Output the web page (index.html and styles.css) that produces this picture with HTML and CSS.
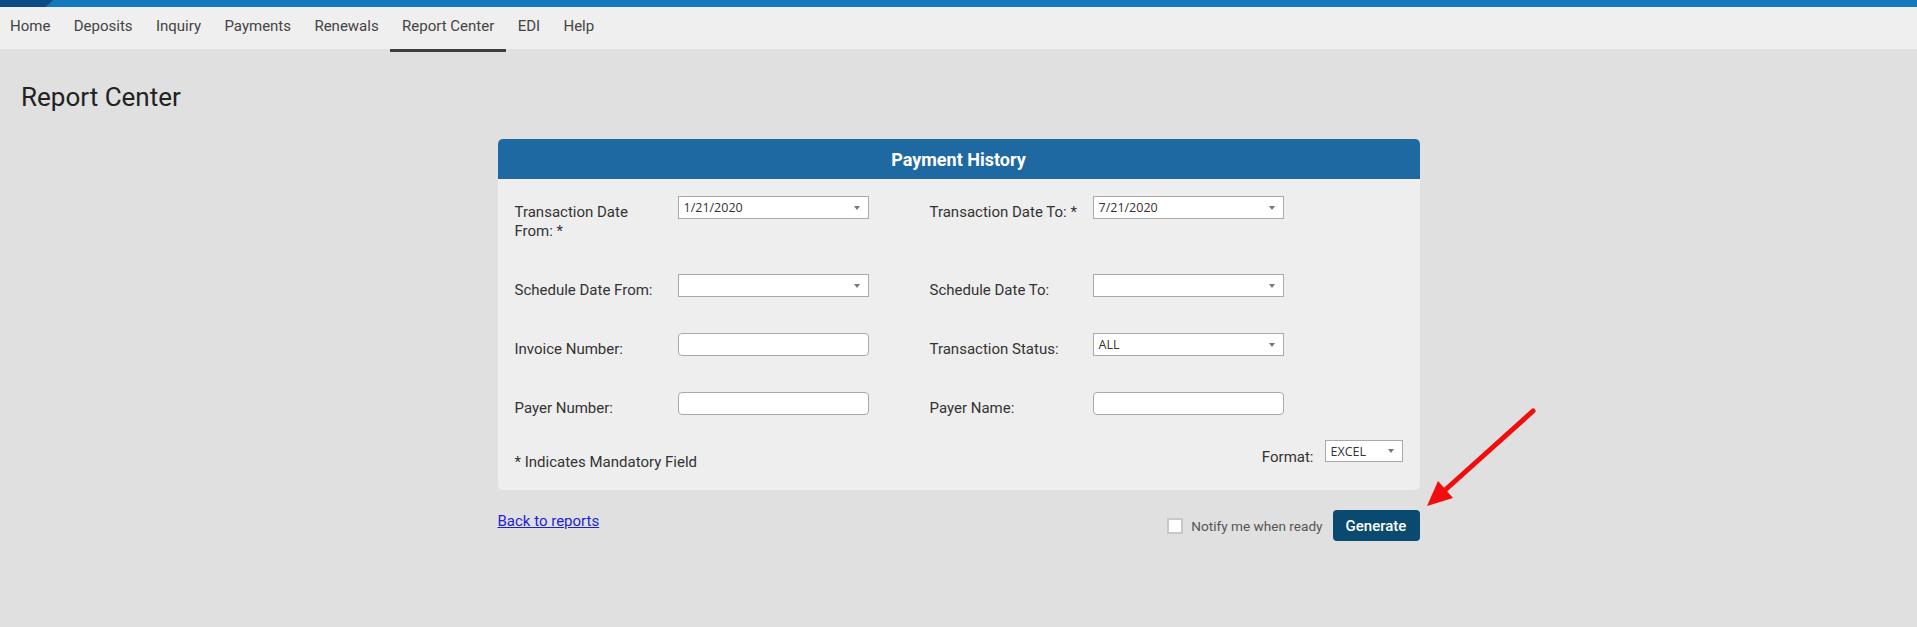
FILE: index.html
```html
<!DOCTYPE html>
<html>

<head>
    <meta charset="utf-8">
    <link rel="stylesheet" href="styles.css">
</head>

<body>
    <div class="topbar">
        <div class="topbar-tab"></div>
    </div>

    <div class="nav">
        <a class="nav-item">Home</a>
        <a class="nav-item">Deposits</a>
        <a class="nav-item">Inquiry</a>
        <a class="nav-item">Payments</a>
        <a class="nav-item">Renewals</a>
        <a class="nav-item active">Report Center</a>
        <a class="nav-item">EDI</a>
        <a class="nav-item">Help</a>
    </div>

    <h1 class="page-title">Report Center</h1>

    <div class="panel">
        <div class="panel-header">Payment History</div>
        <div class="panel-body">
            <div class="form-grid">
                <div class="field">
                    <label>Transaction Date From: *</label>
                    <div class="combo"><span>1/21/2020</span><span class="caret"></span></div>
                </div>
                <div class="field">
                    <label>Transaction Date To: *</label>
                    <div class="combo"><span>7/21/2020</span><span class="caret"></span></div>
                </div>

                <div class="field">
                    <label>Schedule Date From:</label>
                    <div class="combo"><span></span><span class="caret"></span></div>
                </div>
                <div class="field">
                    <label>Schedule Date To:</label>
                    <div class="combo"><span></span><span class="caret"></span></div>
                </div>

                <div class="field">
                    <label>Invoice Number:</label>
                    <div class="text-input"></div>
                </div>
                <div class="field">
                    <label>Transaction Status:</label>
                    <div class="combo"><span>ALL</span><span class="caret"></span></div>
                </div>

                <div class="field">
                    <label>Payer Number:</label>
                    <div class="text-input"></div>
                </div>
                <div class="field">
                    <label>Payer Name:</label>
                    <div class="text-input"></div>
                </div>
            </div>

            <div class="form-footer">
                <div class="mandatory-note">* Indicates Mandatory Field</div>
                <div class="format-group">
                    <label>Format:</label>
                    <div class="combo combo-small"><span>EXCEL</span><span class="caret"></span></div>
                </div>
            </div>
        </div>
    </div>

    <div class="actions">
        <a class="back-link" href="#">Back to reports</a>
        <div class="actions-right">
            <span class="checkbox"></span>
            <span class="notify-text">Notify me when ready</span>
            <button class="generate-btn">Generate</button>
        </div>
    </div>

    <!-- annotation arrow drawn over the page -->
    <svg class="annotation" width="1917" height="627" viewBox="0 0 1917 627">
        <line x1="1533" y1="411" x2="1444" y2="491" stroke="#f20d0d" stroke-width="5" stroke-linecap="round" />
        <polygon points="1427,506 1438,481 1453,498" fill="#f20d0d" />
    </svg>
</body>

</html>
```

FILE: styles.css
```css
* {
    margin: 0;
    padding: 0;
    box-sizing: border-box;
}

body {
    width: 1917px;
    min-height: 627px;
    font-family: Roboto, 'Liberation Sans', sans-serif;
    background: #e0e0e0;
    color: #333333;
    position: relative;
    overflow: hidden;
}

.topbar {
    height: 7px;
    background: #1479bc;
}

.topbar-tab {
    width: 53px;
    height: 7px;
    background: #0c4b85;
    clip-path: polygon(0 0, 100% 0, 86% 100%, 0 100%);
}

.nav {
    height: 42px;
    background: #efefef;
    display: flex;
}

.nav-item {
    position: relative;
    display: flex;
    align-items: center;
    padding: 0 11.7px 4px;
    font-size: 15px;
    color: #444444;
    cursor: pointer;
}

.nav-item:first-child {
    padding-left: 10px;
}

.nav-item.active::after {
    content: '';
    position: absolute;
    left: 0;
    right: 0;
    bottom: -3px;
    height: 3px;
    background: #3d3d3d;
}

.page-title {
    margin-top: 33px;
    padding-left: 21px;
    font-size: 26px;
    font-weight: 400;
    line-height: 31px;
    color: #222222;
}

.panel {
    width: 922px;
    margin: 26px auto 0;
}

.panel-header {
    height: 40px;
    background: #1f69a3;
    border-radius: 5px 5px 0 0;
    color: #ffffff;
    font-size: 18px;
    font-weight: 700;
    display: flex;
    align-items: center;
    justify-content: center;
}

.panel-body {
    background: #eeeeee;
    border-radius: 0 0 5px 5px;
    padding: 17px 17px 18px 17px;
}

.form-grid {
    display: grid;
    grid-template-columns: 354px 355px;
    column-gap: 61px;
    row-gap: 33px;
}

.field {
    display: flex;
    align-items: flex-start;
}

.field label {
    width: 163px;
    padding: 7px 11px 0 0;
    font-size: 15px;
    line-height: 19px;
    color: #333333;
}

.combo {
    width: 191px;
    height: 23px;
    background: #ffffff;
    border: 1px solid #a9a9a9;
    display: flex;
    align-items: center;
    justify-content: space-between;
    padding: 0 8px 0 5px;
    font-family: 'Open Sans', 'Liberation Sans', sans-serif;
    font-size: 12.5px;
    color: #333333;
}

.caret {
    width: 0;
    height: 0;
    border-left: 3.5px solid transparent;
    border-right: 3.5px solid transparent;
    border-top: 4px solid #777777;
}

.text-input {
    width: 191px;
    height: 23px;
    background: #ffffff;
    border: 1px solid #a9a9a9;
    border-radius: 4px;
}

.form-footer {
    margin-top: 22px;
    display: flex;
    justify-content: space-between;
    align-items: flex-start;
}

.mandatory-note {
    padding-top: 13px;
    font-size: 15px;
    line-height: 19px;
}

.format-group {
    display: flex;
    align-items: flex-start;
    gap: 11px;
}

.format-group label {
    padding-top: 8px;
    font-size: 15px;
    line-height: 19px;
}

.combo-small {
    width: 78px;
    height: 22px;
}

.actions {
    width: 922px;
    margin: 20px auto 0;
    display: flex;
    justify-content: space-between;
    align-items: flex-start;
}

.back-link {
    padding-top: 2px;
    font-size: 15px;
    line-height: 19px;
    color: #1f1fcf;
    text-decoration: underline;
}

.actions-right {
    display: flex;
    align-items: center;
}

.checkbox {
    width: 16px;
    height: 16px;
    background: #ffffff;
    border: 2px solid #c8c8c8;
    margin-right: 8px;
}

.notify-text {
    font-size: 13.6px;
    color: #555555;
    margin-right: 10px;
}

.generate-btn {
    width: 87px;
    height: 31px;
    border: none;
    border-radius: 4px;
    background: #0b4a70;
    color: #ffffff;
    font-family: Roboto, 'Liberation Sans', sans-serif;
    font-size: 15px;
    font-weight: 500;
    cursor: pointer;
}

.annotation {
    position: absolute;
    left: 0;
    top: 0;
    pointer-events: none;
}
```
